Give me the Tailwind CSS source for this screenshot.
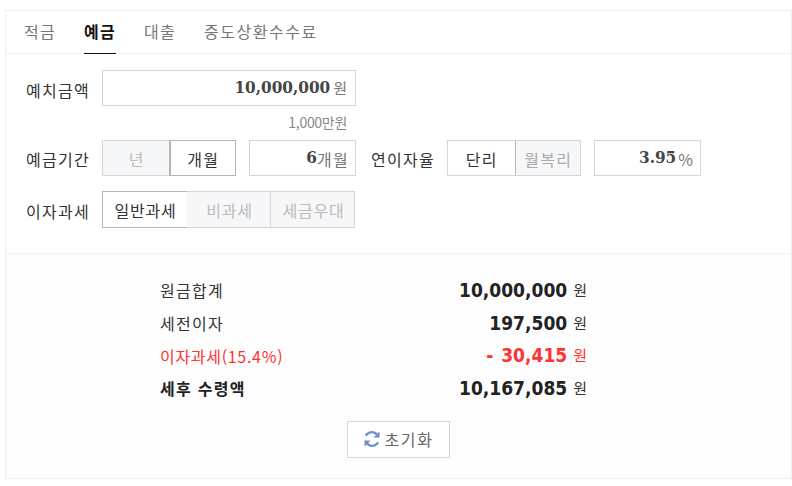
<!DOCTYPE html>
<html lang="ko">
<head>
  <meta charset="UTF-8">
  <title>예금 계산기</title>
  <script src="https://cdn.jsdelivr.net/npm/@tailwindcss/browser@4"></script>
</head>
<body class="bg-white font-['Noto_Sans_CJK_KR',sans-serif] text-[#333] text-[16px] tracking-[1.3px]">
  <div class="ml-[5px] mt-[10px] w-[787px] h-[469px] border border-[#f0f0f0] flex flex-col">
    <!-- 탭 -->
    <div class="h-[43px] border-b border-[#f0f0f0] flex gap-[28px] pl-[18px] text-[#777] whitespace-nowrap">
      <a class="w-[32px] h-[43px] leading-[41px]">적금</a>
      <a class="w-[32px] h-[43px] leading-[41px] font-bold text-[#111] border-b border-[#111]">예금</a>
      <a class="w-[32px] h-[43px] leading-[41px]">대출</a>
      <a class="h-[43px] leading-[41px] tracking-[1.55px]">중도상환수수료</a>
    </div>

    <!-- 입력 -->
    <div class="h-[200px] pl-[20px] pt-[16px] border-b border-[#f0f0f0]">
      <div class="flex items-center h-[36px]">
        <label class="w-[76px] pt-[3px]">예치금액</label>
        <div class="w-[254px] h-[36px] border border-[#d5d5d8] flex items-center justify-end pr-[8px] text-[#777]">
          <b class="font-['DejaVu_Serif_Condensed',serif] text-[17px] tracking-normal text-[#444] mr-[3px]">10,000,000</b><span class="tracking-normal text-[15px]">원</span>
        </div>
      </div>
      <div class="w-[321px] h-[34px] text-right text-[14px] tracking-[-0.3px] text-[#888] leading-[32px]">1,000만원</div>
      <div class="flex items-center h-[36px]">
        <label class="w-[76px] pt-[2px]">예금기간</label>
        <div class="flex w-[134px] h-[36px] border border-[#d5d5d8]">
          <span class="w-[68px] bg-[#f6f7f9] text-[#bbb] text-center leading-[36px]">년</span>
          <span class="w-[65px] border-l border-[#b5b5b5] outline outline-[#b5b5b5] text-center leading-[36px]">개월</span>
        </div>
        <div class="ml-[13px] w-[107px] h-[36px] border border-[#d5d5d8] flex items-center justify-end pr-[6px] text-[#777]">
          <b class="font-['DejaVu_Serif_Condensed',serif] text-[17px] tracking-normal text-[#444]">6</b><span class="pt-[1px]">개월</span>
        </div>
        <label class="ml-[15px] w-[76px] pt-[2px]">연이자율</label>
        <div class="flex w-[134px] h-[36px] border border-[#d5d5d8]">
          <span class="w-[68px] text-center leading-[36px]">단리</span>
          <span class="w-[65px] bg-[#f6f7f9] border-l border-[#b5b5b5] text-[#aaa] text-center leading-[36px]">월복리</span>
        </div>
        <div class="ml-[13px] w-[107px] h-[36px] border border-[#d5d5d8] flex items-center justify-end pr-[7px] text-[#777]">
          <b class="font-['DejaVu_Serif_Condensed',serif] text-[17px] tracking-normal text-[#444] mr-[2px]">3.95</b><span class="tracking-normal pt-[1px]">%</span>
        </div>
      </div>
      <div class="flex items-center h-[37px] mt-[15px]">
        <label class="w-[76px] pt-[2px]">이자과세</label>
        <div class="flex w-[253px] h-[37px] border border-[#d5d5d8]">
          <span class="w-[83px] pl-[2px] outline outline-[#b5b5b5] text-center leading-[37px] tracking-[0.8px]">일반과세</span>
          <span class="w-[84px] pl-[3px] bg-[#f6f7f9] text-[#bbb] text-center leading-[37px] tracking-[0.8px]">비과세</span>
          <span class="w-[84px] pl-[2px] bg-[#f6f7f9] border-l border-[#d5d5d8] text-[#bbb] text-center leading-[37px] tracking-[0.8px]">세금우대</span>
        </div>
      </div>
    </div>

    <!-- 결과 -->
    <div class="flex-1 bg-[#fdfdfd] pt-[20px] pl-[154px]">
      <div class="w-[427px] flex flex-col">
        <div class="flex justify-between items-center h-[32.7px]">
          <span>원금합계</span>
          <span class="flex items-center gap-[6px]"><b class="font-['DejaVu_Sans_Condensed',sans-serif] text-[19px] tracking-normal text-[#222]">10,000,000</b><i class="not-italic tracking-normal text-[15px]">원</i></span>
        </div>
        <div class="flex justify-between items-center h-[32.7px]">
          <span>세전이자</span>
          <span class="flex items-center gap-[6px]"><b class="font-['DejaVu_Sans_Condensed',sans-serif] text-[19px] tracking-normal text-[#222]">197,500</b><i class="not-italic tracking-normal text-[15px]">원</i></span>
        </div>
        <div class="flex justify-between items-center h-[32.7px] text-[#ff3333]">
          <span class="tracking-[0.7px]">이자과세(15.4%)</span>
          <span class="flex items-center gap-[6px]"><b class="font-['DejaVu_Sans_Condensed',sans-serif] text-[19px] tracking-normal [word-spacing:2px]">- 30,415</b><i class="not-italic tracking-normal text-[15px]">원</i></span>
        </div>
        <div class="flex justify-between items-center h-[32.7px]">
          <span class="font-bold text-[#222]">세후 수령액</span>
          <span class="flex items-center gap-[6px]"><b class="font-['DejaVu_Sans_Condensed',sans-serif] text-[19px] tracking-normal text-[#222]">10,167,085</b><i class="not-italic tracking-normal text-[15px]">원</i></span>
        </div>
      </div>
      <button class="flex items-center justify-center gap-[4px] ml-[187px] mt-[16px] w-[103px] h-[37px] border border-[#d5d5d8] bg-white text-[#666] tracking-[1.6px]">
        <svg class="w-[18px] h-[18px] -ml-[1px]" viewBox="0 0 24 24" fill="none" stroke="#6f8fd0" stroke-width="3" stroke-linejoin="round">
          <path d="M20.5 9.5A9 9 0 0 0 5.5 5.5L3.5 7.5"/><path d="M21.5 2.5v7h-7" fill="#6f8fd0" stroke-width="1"/><path d="M3.5 14.5a9 9 0 0 0 15 4l2-2"/><path d="M2.5 21.5v-7h7" fill="#6f8fd0" stroke-width="1"/>
        </svg>
        초기화
      </button>
    </div>
  </div>
</body>
</html>
